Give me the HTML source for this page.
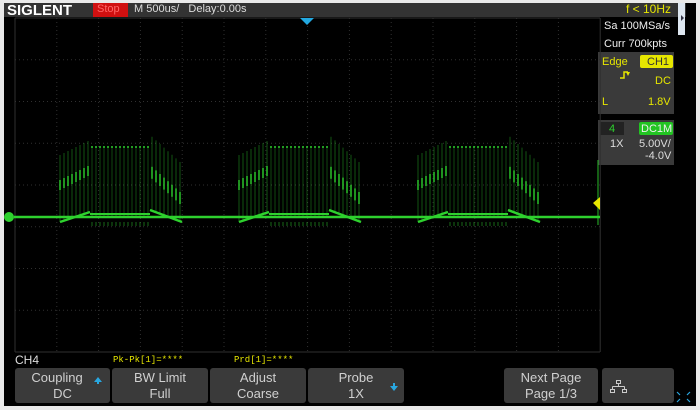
<!DOCTYPE html>
<html><head><meta charset="utf-8"><style>
body{margin:0;width:700px;height:410px;background:#e9e9e9;overflow:hidden;font-family:"Liberation Sans",sans-serif}
#scr{position:absolute;left:4px;top:3px;width:692px;height:403px;background:#000}
.t{position:absolute;white-space:nowrap}
.btn{position:absolute;top:368px;height:35px;background:#3a3a3a;border-radius:3px;color:#d0d0d0;font-size:13px;text-align:center;line-height:16px;padding-top:2px;box-sizing:border-box}
</style></head><body>
<div id="scr"></div>
<svg width="700" height="410" style="position:absolute;left:0;top:0">
<rect x="4" y="3" width="682" height="14" fill="#333"/>
<rect x="93" y="3" width="35" height="14" fill="#d01010"/>
<rect x="678" y="3" width="7" height="32" fill="#dde6f0"/>
<polygon points="681,15 684,18 681,21" fill="#334"/>
<rect x="598" y="52" width="76" height="62" fill="#3a3a3a"/>
<rect x="598" y="120" width="76" height="45" fill="#3a3a3a"/>
<rect x="600" y="122" width="24" height="13" fill="#222"/>
<rect x="639" y="122" width="34" height="13" rx="2" fill="#22c422"/>
<rect x="640" y="55" width="33" height="13" rx="2" fill="#e6e600"/>
<g id="grid" stroke="#303030" stroke-width="1"></g>
<g id="wave" stroke="#2ed12e" stroke-width="1" fill="none"></g>
<polygon points="300,18 314,18 307,25" fill="#22a8e0"/>
<polygon points="600,197 600,210 593,203" fill="#e6e600"/>
<circle cx="9" cy="217" r="5" fill="#2ed12e"/>
<path d="M620 78h4v-6h4" stroke="#e6e600" stroke-width="1.5" fill="none"/>
<polygon points="626,72 630,72 628,76" fill="#e6e600"/>
</svg>
<div class="t" style="left:7px;top:2px;color:#fff;font-weight:bold;font-size:15px">SIGLENT</div>
<div class="t" style="left:97px;top:3px;color:#f66;font-size:11px">Stop</div>
<div class="t" style="left:134px;top:3px;color:#ddd;font-size:11px">M 500us/&nbsp;&nbsp; Delay:0.00s</div>
<div class="t" style="left:626px;top:2px;color:#e6e600;font-size:12px">f &lt; 10Hz</div>
<div class="t" style="left:604px;top:20px;color:#eee;font-size:11px">Sa 100MSa/s</div>
<div class="t" style="left:604px;top:38px;color:#eee;font-size:11px">Curr 700kpts</div>
<div class="t" style="left:602px;top:56px;color:#e6e600;font-size:11px">Edge</div>
<div class="t" style="left:647px;top:56px;color:#333;font-size:11px">CH1</div>
<div class="t" style="left:655px;top:75px;color:#e6e600;font-size:11px">DC</div>
<div class="t" style="left:602px;top:96px;color:#e6e600;font-size:11px">L</div>
<div class="t" style="left:648px;top:96px;color:#e6e600;font-size:11px">1.8V</div>
<div class="t" style="left:609px;top:123px;color:#2ed12e;font-size:11px">4</div>
<div class="t" style="left:641px;top:123px;color:#eee;font-size:11px">DC1M</div>
<div class="t" style="left:610px;top:138px;color:#ddd;font-size:11px">1X</div>
<div class="t" style="left:639px;top:138px;color:#ddd;font-size:11px">5.00V/</div>
<div class="t" style="left:645px;top:150px;color:#ddd;font-size:11px">-4.0V</div>
<div class="t" style="left:15px;top:353px;color:#ddd;font-size:12px">CH4</div>
<div class="t" style="left:113px;top:355px;color:#e6e600;font-size:9px;font-family:'Liberation Mono',monospace">Pk-Pk[1]=****</div>
<div class="t" style="left:234px;top:355px;color:#e6e600;font-size:9px;font-family:'Liberation Mono',monospace">Prd[1]=****</div>
<div class="btn" style="left:15px;width:95px">Coupling&nbsp;&nbsp;&nbsp;<br>DC</div>
<div class="btn" style="left:112px;width:96px">BW Limit<br>Full</div>
<div class="btn" style="left:210px;width:96px">Adjust<br>Coarse</div>
<div class="btn" style="left:308px;width:96px">Probe<br>1X</div>
<div class="btn" style="left:504px;width:94px">Next Page<br>Page 1/3</div>
<div class="btn" style="left:602px;width:72px"></div>
<svg width="700" height="410" style="position:absolute;left:0;top:0">
<polygon points="94,382 98,377 102,382" fill="#29a7e0"/><rect x="97" y="381" width="2" height="3" fill="#29a7e0"/>
<polygon points="390,386 394,391 398,386" fill="#29a7e0"/><rect x="393" y="383" width="2" height="3" fill="#29a7e0"/>
<g stroke="#ccc" fill="none" stroke-width="1"><rect x="616.5" y="380.5" width="4" height="3"/><path d="M618.5 383.5v3M612.5 386.5h12M612.5 386.5v2.5M624.5 386.5v2.5"/><rect x="610.5" y="389.5" width="4" height="3"/><rect x="622.5" y="389.5" width="4" height="3"/></g>
<g stroke="#29a7e0" stroke-width="1.2"><path d="M677 392l3 3M690 392l-3 3M677 402l3-3M690 402l-3-3"/></g>
</svg>
<script>
var ns="http://www.w3.org/2000/svg";
function L(g,x1,y1,x2,y2,a){var l=document.createElementNS(ns,"line");l.setAttribute("x1",x1);l.setAttribute("y1",y1);l.setAttribute("x2",x2);l.setAttribute("y2",y2);if(a)for(var k in a)l.setAttribute(k,a[k]);g.appendChild(l);}
var g=document.getElementById("grid");
for(var i=0;i<=14;i++){var x=15+i*41.8;L(g,x,18,x,352,i==0||i==14?{}:{ "stroke-dasharray":"1 3"});}
for(var j=0;j<=8;j++){var y=18+j*41.75;L(g,15,y,600,y,j==0||j==8?{}:{ "stroke-dasharray":"1 3"});}
var w=document.getElementById("wave");
L(w,14,217,600,217,{"stroke-width":"2.5"});
[60,239,418].forEach(function(s){
 for(var x=s;x<s+122;x+=4){var t=x-s,top,low;
  if(t<30){top=180-t*0.5;low=222-t*0.35;L(w,x,top-25,x,low,{"stroke-opacity":"0.4"});L(w,x,top,x,top+10,{"stroke-width":"1.5","stroke-opacity":"0.9"});}
  else if(t<90){top=146;low=218;L(w,x,top,x,low,{"stroke-opacity":"0.35"});L(w,x,top,x,top+2,{"stroke-width":"1.5"});L(w,x,222,x,226,{"stroke-opacity":"0.5"});}
  else{var u=t-90;top=155+u*0.9;low=210+u*0.35;L(w,x,top-20,x,low,{"stroke-opacity":"0.4"});L(w,x,top+10,x,top+22,{"stroke-width":"1.5","stroke-opacity":"0.9"});}
 }
 L(w,s,222,s+30,212,{"stroke-width":"2.5"});L(w,s+30,214,s+90,214,{"stroke-width":"2"});L(w,s+90,210,s+122,222,{"stroke-width":"2.5"});
});
L(w,598,160,598,225,{"stroke-width":"1.5","stroke-opacity":"0.6"});
</script>
</body></html>
